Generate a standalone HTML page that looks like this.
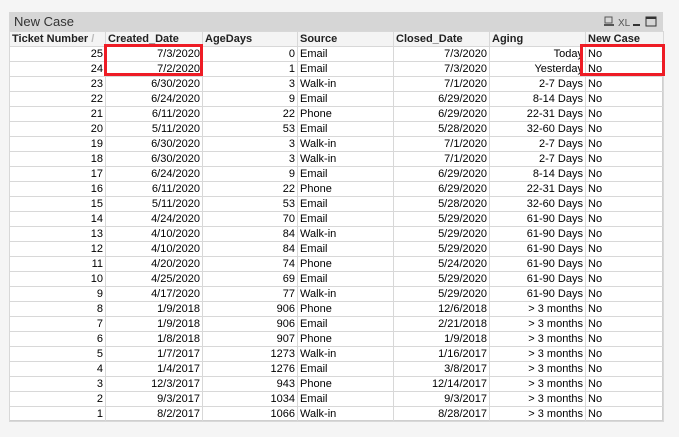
<!DOCTYPE html><html><head><style>
body{margin:0;width:679px;height:437px;background:#f5f5f5;font-family:"Liberation Sans",sans-serif;font-size:11px;color:#000;position:relative;overflow:hidden}
.p{position:absolute;left:9px;top:12px;width:654px;height:409px;background:#fff;border:1px solid #cfcfcf;box-sizing:border-box}
.t{position:absolute;left:9px;top:12px;width:654px;height:19px;background:#d6d6d6}
.t span{position:absolute;left:5px;top:2px;font-size:13px;color:#333}
table{position:absolute;left:9px;top:31px;border-collapse:collapse;table-layout:fixed}
td{height:14px;border:1px solid #d8d8d8;padding:0 2px;white-space:nowrap;overflow:hidden;line-height:14px}
tr.h td{font-weight:bold;background:#f4f4f4;color:#222}
.r{text-align:right}
.box{position:absolute;border:3px solid #ee1c25;box-sizing:border-box}
</style></head><body>
<div class="p"></div>
<div class="t"><span>New Case</span>
<svg style="position:absolute;left:595px;top:4px" width="55" height="12"><rect x="1" y="1" width="7" height="6" fill="none" stroke="#555"/><rect x="0" y="8" width="10" height="2" fill="#555"/><text x="14" y="10" font-size="10" fill="#555" font-family="Liberation Sans">XL</text><rect x="29" y="8" width="7" height="2" fill="#333"/><rect x="42" y="1" width="10" height="9" fill="none" stroke="#333"/><rect x="42" y="1" width="10" height="2" fill="#333"/></svg></div>
<table>
<colgroup><col style="width:96px"><col style="width:97px"><col style="width:95px"><col style="width:96px"><col style="width:96px"><col style="width:96px"><col style="width:78px"></colgroup>
<tr class="h"><td>Ticket Number <span style="color:#bbb">/</span></td><td>Created_Date</td><td>AgeDays</td><td>Source</td><td>Closed_Date</td><td>Aging</td><td>New Case</td></tr>
<tr><td class="r">25</td><td class="r">7/3/2020</td><td class="r">0</td><td>Email</td><td class="r">7/3/2020</td><td class="r">Today</td><td>No</td></tr>
<tr><td class="r">24</td><td class="r">7/2/2020</td><td class="r">1</td><td>Email</td><td class="r">7/3/2020</td><td class="r">Yesterday</td><td>No</td></tr>
<tr><td class="r">23</td><td class="r">6/30/2020</td><td class="r">3</td><td>Walk-in</td><td class="r">7/1/2020</td><td class="r">2-7 Days</td><td>No</td></tr>
<tr><td class="r">22</td><td class="r">6/24/2020</td><td class="r">9</td><td>Email</td><td class="r">6/29/2020</td><td class="r">8-14 Days</td><td>No</td></tr>
<tr><td class="r">21</td><td class="r">6/11/2020</td><td class="r">22</td><td>Phone</td><td class="r">6/29/2020</td><td class="r">22-31 Days</td><td>No</td></tr>
<tr><td class="r">20</td><td class="r">5/11/2020</td><td class="r">53</td><td>Email</td><td class="r">5/28/2020</td><td class="r">32-60 Days</td><td>No</td></tr>
<tr><td class="r">19</td><td class="r">6/30/2020</td><td class="r">3</td><td>Walk-in</td><td class="r">7/1/2020</td><td class="r">2-7 Days</td><td>No</td></tr>
<tr><td class="r">18</td><td class="r">6/30/2020</td><td class="r">3</td><td>Walk-in</td><td class="r">7/1/2020</td><td class="r">2-7 Days</td><td>No</td></tr>
<tr><td class="r">17</td><td class="r">6/24/2020</td><td class="r">9</td><td>Email</td><td class="r">6/29/2020</td><td class="r">8-14 Days</td><td>No</td></tr>
<tr><td class="r">16</td><td class="r">6/11/2020</td><td class="r">22</td><td>Phone</td><td class="r">6/29/2020</td><td class="r">22-31 Days</td><td>No</td></tr>
<tr><td class="r">15</td><td class="r">5/11/2020</td><td class="r">53</td><td>Email</td><td class="r">5/28/2020</td><td class="r">32-60 Days</td><td>No</td></tr>
<tr><td class="r">14</td><td class="r">4/24/2020</td><td class="r">70</td><td>Email</td><td class="r">5/29/2020</td><td class="r">61-90 Days</td><td>No</td></tr>
<tr><td class="r">13</td><td class="r">4/10/2020</td><td class="r">84</td><td>Walk-in</td><td class="r">5/29/2020</td><td class="r">61-90 Days</td><td>No</td></tr>
<tr><td class="r">12</td><td class="r">4/10/2020</td><td class="r">84</td><td>Email</td><td class="r">5/29/2020</td><td class="r">61-90 Days</td><td>No</td></tr>
<tr><td class="r">11</td><td class="r">4/20/2020</td><td class="r">74</td><td>Phone</td><td class="r">5/24/2020</td><td class="r">61-90 Days</td><td>No</td></tr>
<tr><td class="r">10</td><td class="r">4/25/2020</td><td class="r">69</td><td>Email</td><td class="r">5/29/2020</td><td class="r">61-90 Days</td><td>No</td></tr>
<tr><td class="r">9</td><td class="r">4/17/2020</td><td class="r">77</td><td>Walk-in</td><td class="r">5/29/2020</td><td class="r">61-90 Days</td><td>No</td></tr>
<tr><td class="r">8</td><td class="r">1/9/2018</td><td class="r">906</td><td>Phone</td><td class="r">12/6/2018</td><td class="r">&gt; 3 months</td><td>No</td></tr>
<tr><td class="r">7</td><td class="r">1/9/2018</td><td class="r">906</td><td>Email</td><td class="r">2/21/2018</td><td class="r">&gt; 3 months</td><td>No</td></tr>
<tr><td class="r">6</td><td class="r">1/8/2018</td><td class="r">907</td><td>Phone</td><td class="r">1/9/2018</td><td class="r">&gt; 3 months</td><td>No</td></tr>
<tr><td class="r">5</td><td class="r">1/7/2017</td><td class="r">1273</td><td>Walk-in</td><td class="r">1/16/2017</td><td class="r">&gt; 3 months</td><td>No</td></tr>
<tr><td class="r">4</td><td class="r">1/4/2017</td><td class="r">1276</td><td>Email</td><td class="r">3/8/2017</td><td class="r">&gt; 3 months</td><td>No</td></tr>
<tr><td class="r">3</td><td class="r">12/3/2017</td><td class="r">943</td><td>Phone</td><td class="r">12/14/2017</td><td class="r">&gt; 3 months</td><td>No</td></tr>
<tr><td class="r">2</td><td class="r">9/3/2017</td><td class="r">1034</td><td>Email</td><td class="r">9/3/2017</td><td class="r">&gt; 3 months</td><td>No</td></tr>
<tr><td class="r">1</td><td class="r">8/2/2017</td><td class="r">1066</td><td>Walk-in</td><td class="r">8/28/2017</td><td class="r">&gt; 3 months</td><td>No</td></tr>
</table>
<div class="box" style="left:104px;top:44px;width:99px;height:32px"></div>
<div class="box" style="left:580px;top:44px;width:85px;height:32px"></div>
</body></html>
